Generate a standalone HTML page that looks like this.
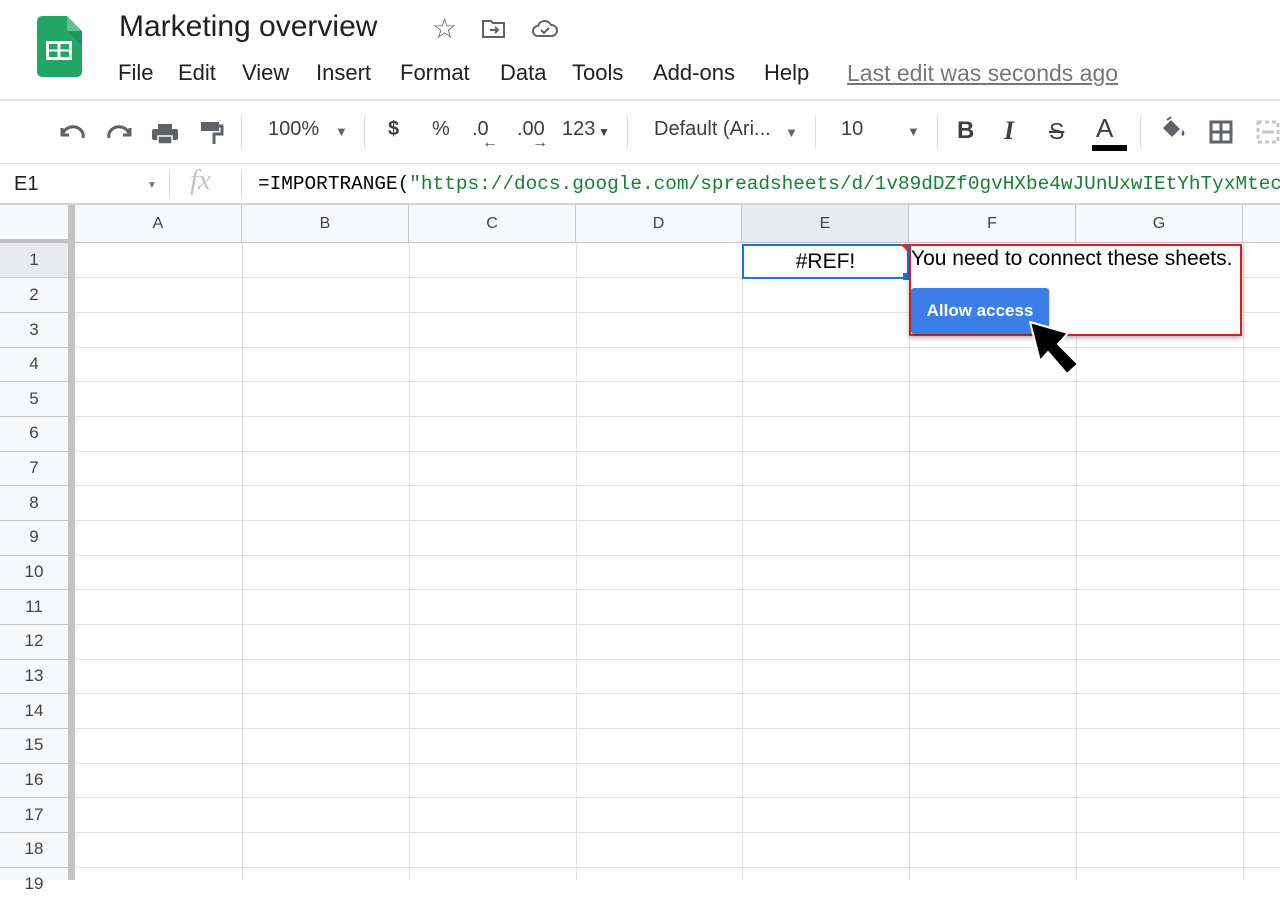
<!DOCTYPE html>
<html><head><meta charset="utf-8"><style>
*{margin:0;padding:0;box-sizing:border-box}
body{width:1280px;height:880px;overflow:hidden;background:#fff;font-family:"Liberation Sans",Arial,sans-serif;position:relative;color:#202124}
.a{position:absolute}
.menu span{position:absolute;top:60px;font-size:22px;color:#202124}
.tb{position:absolute;top:118px;font-size:20px;color:#3c4043}
.sep{position:absolute;top:116px;width:1px;height:32px;background:#dadce0}
.ch{position:absolute;top:205px;height:38px;font-size:16px;color:#444;text-align:center;line-height:38px;border-right:1px solid #c9c9c9;background:#f8f9fa}
.rh{position:absolute;left:0;width:68px;height:35px;font-size:17px;color:#444;text-align:center;line-height:34px}
</style></head><body>
<svg class="a" style="left:37px;top:16px" width="45" height="61" viewBox="0 0 45 61">
<path d="M5 0H30L45 15V56a5 5 0 0 1-5 5H5a5 5 0 0 1-5-5V5a5 5 0 0 1 5-5z" fill="#23a566"/>
<path d="M30 0V15H45z" fill="#8ed1b1" opacity=".6"/>
<path d="M30 15L45 30V15z" fill="#1a8a50" opacity=".5"/>
<rect x="9" y="25" width="26" height="19" fill="#fff"/>
<rect x="12" y="28" width="8.5" height="5.5" fill="#23a566"/><rect x="23.5" y="28" width="8.5" height="5.5" fill="#23a566"/>
<rect x="12" y="35.5" width="8.5" height="5.5" fill="#23a566"/><rect x="23.5" y="35.5" width="8.5" height="5.5" fill="#23a566"/>
</svg>
<div class="a" style="left:119px;top:10px;font-size:30px;color:#202124">Marketing overview</div>
<div class="a" style="left:432px;top:12px;font-size:28px;color:#5f6368">☆</div>
<svg class="a" style="left:481px;top:18px" width="26" height="22" viewBox="0 0 26 22"><path d="M2 3h8l2 2h11v14H2z" fill="none" stroke="#5f6368" stroke-width="2"/><path d="M9 12h8M14 9l3 3-3 3" fill="none" stroke="#5f6368" stroke-width="2"/></svg>
<svg class="a" style="left:531px;top:18px" width="28" height="22" viewBox="0 0 28 22"><path d="M7 18a5 5 0 0 1 0-10 7 7 0 0 1 13-1 5.5 5.5 0 0 1 1 11z" fill="none" stroke="#5f6368" stroke-width="2"/><path d="M10 12l3 3 5-5" fill="none" stroke="#5f6368" stroke-width="2"/></svg>
<div class="menu"><span style="left:118px">File</span><span style="left:178px">Edit</span><span style="left:242px">View</span><span style="left:316px">Insert</span><span style="left:400px">Format</span><span style="left:500px">Data</span><span style="left:572px">Tools</span><span style="left:653px">Add-ons</span><span style="left:764px">Help</span><span style="left:847px;color:#777;text-decoration:underline;font-size:23px">Last edit was seconds ago</span></div>
<div class="a" style="left:0;top:99px;width:1280px;height:2px;background:#e3e3e3"></div>
<svg class="a" style="left:58px;top:120px" width="170" height="26" viewBox="0 0 170 26">
<path d="M4 8v7h7" fill="none" stroke="#5f6368" stroke-width="3"/><path d="M5 14a10 9 0 0 1 20 4" fill="none" stroke="#5f6368" stroke-width="3"/>
<path d="M72 8v7h-7" fill="none" stroke="#5f6368" stroke-width="3"/><path d="M71 14a10 9 0 0 0-20 4" fill="none" stroke="#5f6368" stroke-width="3"/>
<rect x="100" y="4" width="14" height="5" fill="#5f6368"/><rect x="94" y="9" width="26" height="11" rx="2" fill="#5f6368"/><rect x="100" y="16" width="14" height="8" fill="#5f6368" stroke="#fff" stroke-width="1.5"/>
<rect x="143" y="2" width="18" height="9" fill="#5f6368"/><path d="M161 6h3v8h-8v10" fill="none" stroke="#5f6368" stroke-width="3"/>
</svg>
<div class="sep" style="left:241px"></div>
<div class="tb" style="left:268px">100%</div><div class="tb" style="left:335px;font-size:13px;top:124px;color:#5f6368">▼</div>
<div class="sep" style="left:364px"></div>
<div class="tb" style="left:388px;font-weight:bold">$</div><div class="tb" style="left:432px">%</div>
<div class="tb" style="left:472px">.0</div><div class="tb" style="left:482px;top:134px;font-size:16px;font-weight:bold">←</div>
<div class="tb" style="left:517px">.00</div><div class="tb" style="left:532px;top:134px;font-size:16px;font-weight:bold">→</div>
<div class="tb" style="left:562px">123</div><div class="tb" style="left:598px;font-size:12px;top:125px">▼</div>
<div class="sep" style="left:627px"></div>
<div class="tb" style="left:654px">Default (Ari...</div><div class="tb" style="left:785px;font-size:13px;top:125px;color:#5f6368">▼</div>
<div class="sep" style="left:815px"></div>
<div class="tb" style="left:841px">10</div><div class="tb" style="left:907px;font-size:13px;top:124px;color:#5f6368">▼</div>
<div class="sep" style="left:937px"></div>
<div class="tb" style="left:957px;font-weight:bold;font-size:24px;top:117px">B</div>
<div class="tb" style="left:1004px;font-style:italic;font-size:26px;top:116px;font-family:'Liberation Serif',serif;font-weight:bold">I</div>
<div class="tb" style="left:1049px;font-size:23px;top:118px;text-decoration:line-through">S</div>
<div class="tb" style="left:1096px;font-size:26px;top:113px">A</div><div class="a" style="left:1092px;top:145px;width:35px;height:6px;background:#000"></div>
<div class="sep" style="left:1140px"></div>
<svg class="a" style="left:1158px;top:116px" width="30" height="28" viewBox="0 0 30 28"><path d="M5 12L13 4l9 9-8 8z" fill="#5f6368"/><path d="M9 4l4-3" stroke="#5f6368" stroke-width="2"/><path d="M25 14q3 4 0 6q-3-2 0-6z" fill="#5f6368"/></svg>
<svg class="a" style="left:1209px;top:120px" width="24" height="24" viewBox="0 0 24 24"><path d="M2 2h20v20H2zM12 2v20M2 12h20" fill="none" stroke="#5f6368" stroke-width="3"/></svg>
<svg class="a" style="left:1256px;top:120px" width="24" height="24" viewBox="0 0 24 24"><path d="M2 2h20v20H2z" fill="none" stroke="#c6c6c6" stroke-width="3" stroke-dasharray="4 3"/><path d="M6 12h12" stroke="#c6c6c6" stroke-width="3"/></svg>
<div class="a" style="left:0;top:163px;width:1280px;height:1px;background:#e0e0e0"></div>
<div class="a" style="left:14px;top:173px;font-size:20px;color:#202124">E1</div>
<div class="a" style="left:147px;top:180px;font-size:10px;color:#777">▼</div>
<div class="a" style="left:169px;top:170px;width:1px;height:28px;background:#dadce0"></div>
<div class="a" style="left:190px;top:164px;font-size:29px;color:#c4c4c4;font-style:italic;font-family:'Liberation Serif',serif">fx</div>
<div class="a" style="left:241px;top:170px;width:1px;height:28px;background:#dadce0"></div>
<div class="a" style="left:258px;top:173px;font-size:19.4px;font-family:'Liberation Mono',monospace;white-space:nowrap;color:#000">=IMPORTRANGE(<span style="color:#188038">"https://docs.google.com/spreadsheets/d/1v89dDZf0gvHXbe4wJUnUxwIEtYhTyxMtecp</span></div>
<div class="a" style="left:0;top:203px;width:1280px;height:2px;background:#d3d3d3"></div>
<div class="a" style="left:0;top:243px;width:68px;height:637px;background:#f8f9fa"></div>
<div class="a" style="left:0;top:243px;width:68px;height:35px;background:#e8eaed"></div>
<svg class="a" style="left:0;top:205px" width="1280" height="675">
<g stroke="#e2e2e2" stroke-width="1" fill="none">
<path d="M242.5 38V675M409.5 38V675M576.5 38V675M742.5 38V675M909.5 38V675M1076.5 38V675M1243.5 38V675"/>
<path d="M75 72.5H1280M75 107.5H1280M75 142.5H1280M75 176.5H1280M75 211.5H1280M75 246.5H1280M75 280.5H1280M75 315.5H1280M75 350.5H1280M75 384.5H1280M75 419.5H1280M75 454.5H1280M75 488.5H1280M75 523.5H1280M75 558.5H1280M75 592.5H1280M75 627.5H1280M75 662.5H1280"/>
</g>
<path stroke="#c9c9c9" d="M0 72.5H68M0 107.5H68M0 142.5H68M0 176.5H68M0 211.5H68M0 246.5H68M0 280.5H68M0 315.5H68M0 350.5H68M0 384.5H68M0 419.5H68M0 454.5H68M0 488.5H68M0 523.5H68M0 558.5H68M0 592.5H68M0 627.5H68M0 662.5H68"/>
</svg>
<div class="rh" style="top:243px">1</div>
<div class="rh" style="top:278px">2</div>
<div class="rh" style="top:313px">3</div>
<div class="rh" style="top:347px">4</div>
<div class="rh" style="top:382px">5</div>
<div class="rh" style="top:416px">6</div>
<div class="rh" style="top:451px">7</div>
<div class="rh" style="top:486px">8</div>
<div class="rh" style="top:520px">9</div>
<div class="rh" style="top:555px">10</div>
<div class="rh" style="top:590px">11</div>
<div class="rh" style="top:624px">12</div>
<div class="rh" style="top:659px">13</div>
<div class="rh" style="top:694px">14</div>
<div class="rh" style="top:728px">15</div>
<div class="rh" style="top:763px">16</div>
<div class="rh" style="top:798px">17</div>
<div class="rh" style="top:832px">18</div>
<div class="rh" style="top:867px">19</div>
<div class="a" style="left:68px;top:243px;width:7px;height:637px;background:#c4c4c4"></div>
<div class="a" style="left:0;top:205px;width:68px;height:35px;background:#f8f9fa"></div>
<div class="a" style="left:68px;top:205px;width:7px;height:38px;background:#c4c4c4"></div>
<div class="a" style="left:0;top:239px;width:75px;height:4px;background:#c4c4c4"></div>
<div class="ch" style="left:75px;width:167px">A</div>
<div class="ch" style="left:242px;width:167px">B</div>
<div class="ch" style="left:409px;width:167px">C</div>
<div class="ch" style="left:576px;width:166px">D</div>
<div class="ch" style="left:742px;width:167px;background:#e8eaed">E</div>
<div class="ch" style="left:909px;width:167px">F</div>
<div class="ch" style="left:1076px;width:167px">G</div>
<div class="ch" style="left:1243px;width:40px"></div>
<div class="a" style="left:0;top:242px;width:1280px;height:1px;background:#c4c4c4"></div>
<div class="a" style="left:742px;top:244px;width:167px;height:35px;border:2px solid #1a73e8;text-align:center;font-size:21px;line-height:31px;color:#000">#REF!</div>
<div class="a" style="left:903px;top:273px;width:6px;height:7px;background:#1a73e8"></div>
<div class="a" style="left:900px;top:244px;width:0;height:0;border-left:8px solid transparent;border-top:8px solid #d93025"></div>
<div class="a" style="left:909px;top:244px;width:333px;height:92px;background:#fff;border:2px solid #d81f26;box-shadow:0 2px 5px rgba(0,0,0,.3)">
<div class="a" style="left:0;top:1px;font-size:21px;color:#000;white-space:nowrap">You need to connect these sheets.</div>
<div class="a" style="left:0;top:42px;width:138px;height:46px;background:#3b7ee8;border-radius:3px;box-shadow:0 1px 2px rgba(0,0,0,.3);color:#fff;font-size:17px;font-weight:bold;line-height:46px;text-align:center">Allow access</div>
</div>
<svg class="a" style="left:1020px;top:315px" width="70" height="70" viewBox="1020 315 70 70">
<path d="M1030 322L1040 361L1048 352L1067 374L1078 364L1058 344L1068 333Z" fill="#000" stroke="#fff" stroke-width="2" stroke-linejoin="round"/>
</svg>
</body></html>
